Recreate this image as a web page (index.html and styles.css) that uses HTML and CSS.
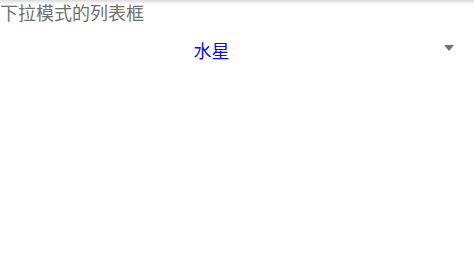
FILE: index.html
```html
<!DOCTYPE html>
<html lang="zh">
<head>
<meta charset="utf-8">
<link rel="stylesheet" href="styles.css">
</head>
<body>
<div class="title">下拉模式的列表框</div>
<div class="spinner">
  <div class="spinner-text">水星</div>
  <div class="spinner-arrow"><span class="tri"></span></div>
</div>
</body>
</html>
```
FILE: styles.css
```css
html, body {
  margin: 0;
  padding: 0;
  background: #fff;
}
body {
  width: 474px;
  height: 272px;
  background: linear-gradient(#dcdcdc, #f4f4f4 3px, #fff 5px) no-repeat;
  font-family: "Noto Sans CJK SC", "Noto Sans", sans-serif;
}
.title {
  font-size: 18px;
  line-height: 24px;
  color: #707070;
}
.spinner {
  display: flex;
  align-items: center;
  height: 52px;
}
.spinner-text {
  flex: 1;
  text-align: center;
  font-size: 18px;
  color: #1010d0;
}
.spinner-arrow {
  width: 51px;
  display: flex;
  justify-content: center;
  align-items: center;
}
.tri {
  width: 0;
  height: 0;
  border-left: 5.5px solid transparent;
  border-right: 5.5px solid transparent;
  border-top: 6px solid #707070;
  margin-top: -4px;
}
```
